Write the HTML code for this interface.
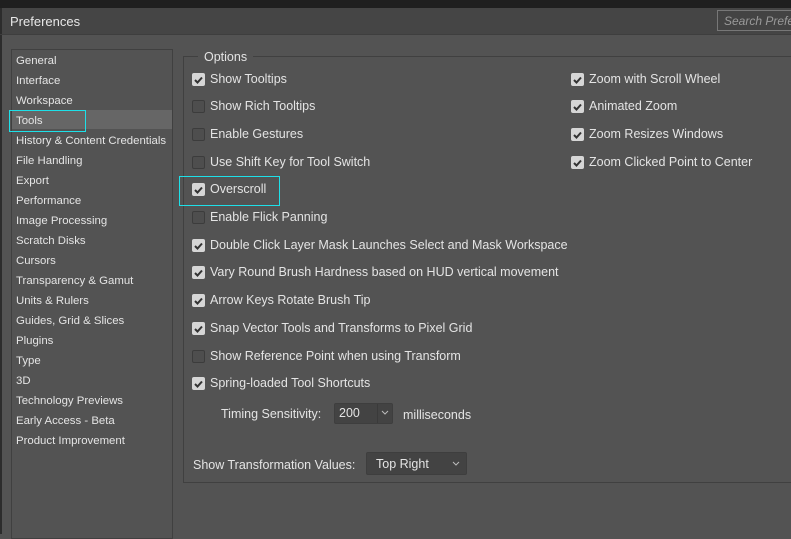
<!DOCTYPE html>
<html><head><style>
*{margin:0;padding:0;box-sizing:border-box}
body{width:791px;height:534px;overflow:hidden;background:#535353;font-family:"Liberation Sans",sans-serif;font-size:12.5px;color:#e4e4e4;position:relative}
.abs{position:absolute;white-space:nowrap}
.cb{position:absolute;width:13px;height:13px;border-radius:2px}
.on{background:#d6d6d6}
.off{border:1px solid #3c3c3c;background:#4e4e4e}
.on svg{position:absolute;left:2px;top:3px}
.li{position:absolute;left:16px;font-size:11.4px}
</style></head><body>
<div class="abs" style="left:0;top:0;width:791px;height:8px;background:#1f1f1f"></div>
<div class="abs" style="left:0;top:8px;width:791px;height:26px;background:#454545"></div>
<div class="abs" style="left:0;top:8px;width:2px;height:526px;background:#2c2c2c"></div>
<div class="abs" style="left:10px;top:14px;font-size:13px;color:#e8e8e8">Preferences</div>
<div class="abs" style="left:717px;top:10px;width:80px;height:21px;border:1px solid #777;background:#434343;color:#9a9a9a;font-style:italic;padding:3px 6px;font-size:12px">Search Prefe</div>
<div class="abs" style="left:0;top:34px;width:791px;height:1px;background:#3e3e3e"></div>

<div class="abs" style="left:11px;top:49px;width:162px;height:490px;border:1px solid #404040"></div>
<div class="abs" style="left:12px;top:110px;width:160px;height:19px;background:#666"></div>
<div class="abs" style="left:9px;top:110px;width:77px;height:22px;border:1px solid #1ee0e8"></div>
<div class="li" style="top:55px">General</div>
<div class="li" style="top:75px">Interface</div>
<div class="li" style="top:95px">Workspace</div>
<div class="li" style="top:115px">Tools</div>
<div class="li" style="top:135px">History &amp; Content Credentials</div>
<div class="li" style="top:155px">File Handling</div>
<div class="li" style="top:175px">Export</div>
<div class="li" style="top:195px">Performance</div>
<div class="li" style="top:215px">Image Processing</div>
<div class="li" style="top:235px">Scratch Disks</div>
<div class="li" style="top:255px">Cursors</div>
<div class="li" style="top:275px">Transparency &amp; Gamut</div>
<div class="li" style="top:295px">Units &amp; Rulers</div>
<div class="li" style="top:315px">Guides, Grid &amp; Slices</div>
<div class="li" style="top:335px">Plugins</div>
<div class="li" style="top:355px">Type</div>
<div class="li" style="top:375px">3D</div>
<div class="li" style="top:395px">Technology Previews</div>
<div class="li" style="top:415px">Early Access - Beta</div>
<div class="li" style="top:435px">Product Improvement</div>

<div class="abs" style="left:183px;top:56px;width:620px;height:427px;border:1px solid #404040"></div>
<div class="abs" style="left:198px;top:50px;background:#535353;padding:0 6px;font-size:12.5px">Options</div>
<div class="abs" style="left:179px;top:176px;width:101px;height:30px;border:1px solid #1ee0e8"></div>

<div id="rows"></div>
<script>
var L=[["Show Tooltips",1],["Show Rich Tooltips",0],["Enable Gestures",0],["Use Shift Key for Tool Switch",0],["Overscroll",1],["Enable Flick Panning",0],["Double Click Layer Mask Launches Select and Mask Workspace",1],["Vary Round Brush Hardness based on HUD vertical movement",1],["Arrow Keys Rotate Brush Tip",1],["Snap Vector Tools and Transforms to Pixel Grid",1],["Show Reference Point when using Transform",0],["Spring-loaded Tool Shortcuts",1]];
var Y=[79,106,134,162,189,217,245,272,300,328,356,383];
var R=[["Zoom with Scroll Wheel",79],["Animated Zoom",106],["Zoom Resizes Windows",134],["Zoom Clicked Point to Center",162]];
var chk='<svg width="9" height="8" viewBox="0 0 9 8"><path d="M1 4 L3.5 6.5 L8 1.5" stroke="#333" stroke-width="2" fill="none"/></svg>';
var h="";
function row(x,y,t,on){h+='<div class="cb '+(on?'on':'off')+'" style="left:'+x+'px;top:'+(y-6)+'px">'+(on?chk:'')+'</div><div class="abs" style="left:'+(x+18)+'px;top:'+(y-7)+'px">'+t+'</div>';}
L.forEach(function(r,i){row(192,Y[i],r[0],r[1]);});
R.forEach(function(r){row(571,r[1],r[0],1);});
document.getElementById("rows").innerHTML=h;
</script>

<div class="abs" style="left:221px;top:407px">Timing Sensitivity:</div>
<div class="abs" style="left:334px;top:403px;width:59px;height:21px;border:1px solid #3e3e3e;background:#434343;border-radius:2px"></div>
<div class="abs" style="left:377px;top:404px;width:1px;height:19px;background:#3a3a3a"></div>
<div class="abs" style="left:339px;top:406px">200</div>
<svg class="abs" style="left:381px;top:410px" width="8" height="6"><path d="M1 1 L4 4 L7 1" stroke="#bbb" fill="none"/></svg>
<div class="abs" style="left:403px;top:408px">milliseconds</div>

<div class="abs" style="left:193px;top:458px">Show Transformation Values:</div>
<div class="abs" style="left:366px;top:452px;width:101px;height:23px;border:1px solid #3e3e3e;background:#434343;border-radius:2px"></div>
<div class="abs" style="left:376px;top:457px">Top Right</div>
<svg class="abs" style="left:452px;top:461px" width="8" height="6"><path d="M1 1 L4 4 L7 1" stroke="#bbb" fill="none"/></svg>
</body></html>
